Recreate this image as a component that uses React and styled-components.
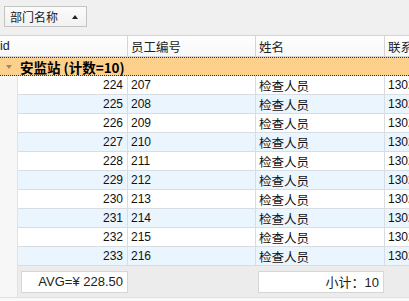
import React from "react";
import styled, { createGlobalStyle } from "styled-components";

const Global = createGlobalStyle`
  html, body { margin: 0; padding: 0; background: #fff; }
  body { width: 409px; height: 301px; overflow: hidden;
    font-family: "Liberation Sans", "Noto Sans CJK SC", sans-serif; font-size: 12px; color: #000; }
`;

const Page = styled.div`
  width: 409px; height: 301px; display: flex; flex-direction: column; overflow: hidden;
  background: #f9f9f9;
`;

const Toolbar = styled.div`
  height: 35px; flex: none; background: #f0f0f0; display: flex; align-items: flex-start;
  padding: 6px 0 0 4px; box-sizing: border-box;
`;

const GroupButton = styled.div`
  width: 83px; height: 21px; box-sizing: border-box; border: 1px solid #c3c3c3;
  background: linear-gradient(#fbfbfb, #f1f1f1); display: flex; align-items: center;
  padding: 0 8px 0 5px; justify-content: space-between;
  font-family: "Noto Sans CJK SC", sans-serif; font-size: 12px; color: #222;
`;

const Arrow = styled.span`
  width: 0; height: 0; border-left: 3.5px solid transparent; border-right: 3.5px solid transparent;
  border-bottom: 4px solid #222;
`;

const Grid = styled.div`
  flex: none; display: flex; flex-direction: column; background: #fff;
`;

const cols = "127px 128px 129px 1fr";

const HeaderRow = styled.div`
  display: grid; grid-template-columns: ${cols}; height: 22px; box-sizing: border-box;
  border-top: 1px solid #d5d5d5; border-bottom: 1px solid #d5d5d5;
  background: linear-gradient(#ffffff, #f7f7f7);
`;

const HeaderCell = styled.div`
  display: flex; align-items: center; padding-left: ${p => p.$pad ?? 3}px; white-space: nowrap; overflow: hidden;
  border-left: ${p => (p.$first ? "none" : "1px solid #d5d5d5")};
  font-family: ${p => (p.$latin ? '"Liberation Sans", sans-serif' : '"Noto Sans CJK SC", sans-serif')};
  font-size: 12.5px; color: #222;
`;

const GroupRow = styled.div`
  height: 19px; box-sizing: border-box; background: #fdd08c; display: flex; align-items: center;
  border-top: 1px dotted #333; border-bottom: 1px dotted #333; padding-left: 6px; gap: 8px;
`;

const GroupArrow = styled.span`
  width: 0; height: 0; border-left: 3.5px solid transparent; border-right: 3.5px solid transparent;
  border-top: 4px solid #9a8a70;
`;

const GroupText = styled.span`
  font-family: "Noto Sans CJK SC", sans-serif; font-weight: 700; font-size: 13.5px; color: #000;
`;

const Body = styled.div`
  display: flex;
`;

const Indent = styled.div`
  width: 18px; flex: none; background: #f7f7f7; border-right: 1px solid #e2e2e2; box-sizing: border-box;
`;

const Rows = styled.div`
  flex: 1; display: flex; flex-direction: column;
`;

const DataRow = styled.div`
  display: grid; grid-template-columns: 109px 128px 129px 1fr; height: 19px; box-sizing: border-box;
  border-bottom: 1px solid #d8dde4; background: ${p => (p.$alt ? "#eaf5fd" : "#ffffff")};
`;

const Cell = styled.div`
  display: flex; align-items: center; white-space: nowrap; overflow: hidden;
  justify-content: ${p => (p.$right ? "flex-end" : "flex-start")};
  padding: 0 ${p => (p.$right ? 4 : 0)}px 0 ${p => (p.$right ? 0 : 3)}px;
  border-left: ${p => (p.$first ? "none" : "1px solid #d8dde4")};
  font-family: ${p => (p.$cjk ? '"Noto Sans CJK SC", sans-serif' : '"Liberation Sans", sans-serif')};
  font-size: ${p => (p.$cjk ? 12.5 : 12)}px; color: #111;
`;

const Footer = styled.div`
  display: flex; height: 31px; background: #ececec; border-bottom: 1px solid #e0e0e0;
`;

const FooterCells = styled.div`
  flex: 1; display: grid; grid-template-columns: 109px 128px 129px 1fr; align-items: center;
  padding-left: 3px;
`;

const SumBox = styled.div`
  height: 22px; box-sizing: border-box; background: #fff; border: 1px solid #d6d6d6;
  display: flex; align-items: center; justify-content: flex-end; padding-right: 4px;
  margin-right: ${p => p.$mr ?? 2}px;
  font-family: "Liberation Sans", "Noto Sans CJK SC", sans-serif; font-size: 13px; color: #222;
`;

const rows = Array.from({ length: 10 }, (_, i) => ({ id: 224 + i, no: 207 + i }));

export default function App() {
  return (
    <>
      <Global />
      <Page>
        <Toolbar>
          <GroupButton>
            <span>部门名称</span>
            <Arrow />
          </GroupButton>
        </Toolbar>
        <Grid>
          <HeaderRow>
            <HeaderCell $first $latin $pad={0}>id</HeaderCell>
            <HeaderCell>员工编号</HeaderCell>
            <HeaderCell>姓名</HeaderCell>
            <HeaderCell>联系电话</HeaderCell>
          </HeaderRow>
          <GroupRow>
            <GroupArrow />
            <GroupText>安监站 (计数=10)</GroupText>
          </GroupRow>
          <Body>
            <Indent />
            <Rows>
              {rows.map((r, i) => (
                <DataRow key={r.id} $alt={i % 2 === 1}>
                  <Cell $first $right>{r.id}</Cell>
                  <Cell>{r.no}</Cell>
                  <Cell $cjk>检查人员</Cell>
                  <Cell>13023456789</Cell>
                </DataRow>
              ))}
            </Rows>
          </Body>
          <Footer>
            <Indent />
            <FooterCells>
              <SumBox>AVG=¥ 228.50</SumBox>
              <span />
              <SumBox $mr={3}>小计：10</SumBox>
              <span />
            </FooterCells>
          </Footer>
        </Grid>
      </Page>
    </>
  );
}
